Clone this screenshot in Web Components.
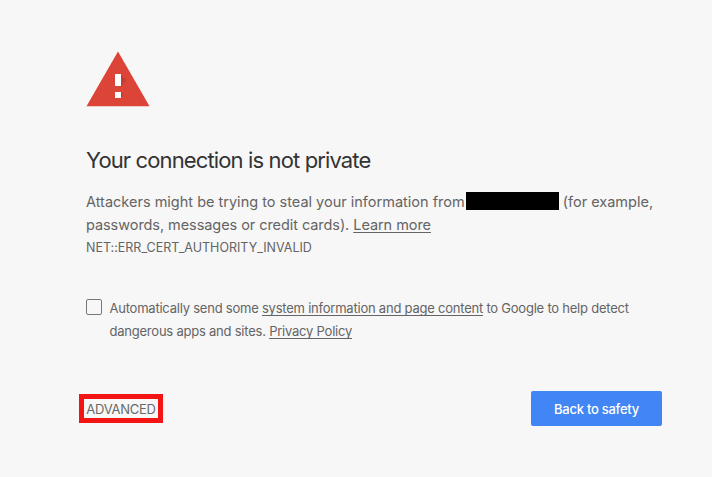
<!DOCTYPE html>
<html lang="en">
<head>
<meta charset="utf-8">
<title>Privacy error</title>
<style>
  body {
    margin: 0;
    background: #f7f7f7;
    color: #646464;
    font-family: Inter, "Liberation Sans", sans-serif;
  }
</style>
</head>
<body>
<ssl-interstitial></ssl-interstitial>

<script>
class WarningIcon extends HTMLElement {
  constructor() {
    super();
    this.attachShadow({ mode: 'open' });
    this.shadowRoot.innerHTML = `
      <style>
        :host { display: block; width: 64px; height: 56px; }
        svg { display: block; }
      </style>
      <svg width="64" height="56" viewBox="0 0 64 56" aria-hidden="true">
        <path fill="#db4437" d="M32 .5 63.5 55.300H.5z"/>
        <path fill="#c53d32" d="M35 24l5 5-5 7zM35 41l3 3-3 3z"/>
        <path fill="#fff" d="M29 23h6v12h-6zM29 41h6v6h-6z"/>
      </svg>`;
  }
}

class TextLink extends HTMLElement {
  constructor() {
    super();
    this.attachShadow({ mode: 'open' });
    this.shadowRoot.innerHTML = `
      <style>
        :host { display: inline; }
        a {
          color: inherit;
          text-decoration: underline;
          text-decoration-thickness: 1px;
          text-underline-offset: 2px;
          text-decoration-skip-ink: none;
        }
      </style>
      <a href="#"><slot></slot></a>`;
  }
}

class RedactedHost extends HTMLElement {
  constructor() {
    super();
    this.attachShadow({ mode: 'open' });
    this.shadowRoot.innerHTML = `
      <style>
        :host {
          display: inline-block;
          width: 93px;
          height: 18px;
          margin: 0 0 0 1px;
          vertical-align: -3px;
          background: #000;
        }
      </style>`;
  }
}

class OptInCheckbox extends HTMLElement {
  constructor() {
    super();
    this.attachShadow({ mode: 'open' });
    this.shadowRoot.innerHTML = `
      <style>
        :host {
          display: flex;
          gap: 7.500px;
          font-size: 13px;
          line-height: 23px;
          letter-spacing: -.225px;
          white-space: nowrap;
        }
        .box {
          box-sizing: border-box;
          flex: none;
          width: 16px;
          height: 16px;
          margin-top: 2px;
          border: 1px solid #777;
          border-radius: 2px;
        }
      </style>
      <span class="box" role="checkbox" aria-checked="false" tabindex="0"></span>
      <div><slot></slot></div>`;

    this.box = this.shadowRoot.querySelector('.box');
  }

  connectedCallback() {
    this.box.addEventListener('click', this.toggle);
  }

  disconnectedCallback() {
    this.box.removeEventListener('click', this.toggle);
  }

  toggle = () => {
    const checked = this.box.getAttribute('aria-checked') === 'true';
    this.box.setAttribute('aria-checked', String(!checked));
  }
}

class PageButton extends HTMLElement {
  constructor() {
    super();
    this.attachShadow({ mode: 'open' });
    this.shadowRoot.innerHTML = `
      <style>
        :host { display: block; }
        button {
          display: block;
          box-sizing: border-box;
          margin: 0;
          padding: 0;
          border: 0;
          background: none;
          color: #696969;
          font: inherit;
          font-size: 13px;
          letter-spacing: -.25px;
          white-space: nowrap;
          cursor: pointer;
        }
        :host([kind="primary"]) button {
          width: 131px;
          height: 35px;
          border-radius: 2px;
          background: #4285f4;
          color: #fff;
          font-weight: 500;
        }
        :host([kind="outlined"]) button {
          width: 84px;
          height: 29px;
          border: 5px solid #f41414;
        }
      </style>
      <button type="button"><slot></slot></button>`;
  }
}

class SslInterstitial extends HTMLElement {
  constructor() {
    super();
    this.attachShadow({ mode: 'open' });
    this.shadowRoot.innerHTML = `
      <style>
        :host {
          display: block;
          box-sizing: border-box;
          width: 712px;
          height: 477px;
          padding: 51px 50px 0 86px;
        }
        h1 {
          margin: 38px 0 0;
          color: #333;
          font-size: 22px;
          font-weight: 400;
          line-height: 30px;
          letter-spacing: -.87px;
          white-space: nowrap;
        }
        p {
          margin: 15px 0 0;
          font-size: 14.500px;
          line-height: 23px;
          white-space: nowrap;
        }
        .second { letter-spacing: -.065px; }
        .code {
          margin-top: 1px;
          font-size: 12.500px;
          line-height: 22px;
          font-feature-settings: "calt" 0;
        }
        opt-in-checkbox { margin-top: 38px; }
        nav {
          display: flex;
          align-items: center;
          justify-content: space-between;
          margin: 48px 0 0 -7px;
        }
      </style>
      <warning-icon></warning-icon>
      <h1>Your connection is not private</h1>
      <p>Attackers might be trying to steal your information from<redacted-host></redacted-host>
        (for example,<br><span class="second">passwords, messages or credit cards). <text-link>Learn more</text-link></span></p>
      <div class="code">NET::ERR_CERT_AUTHORITY_INVALID</div>
      <opt-in-checkbox>Automatically send some <text-link>system information and page content</text-link>
        to Google to help detect<br>dangerous apps and sites. <text-link>Privacy Policy</text-link></opt-in-checkbox>
      <nav>
        <page-button kind="outlined">ADVANCED</page-button>
        <page-button kind="primary">Back to safety</page-button>
      </nav>`;
  }
}

customElements.define('warning-icon', WarningIcon);
customElements.define('text-link', TextLink);
customElements.define('redacted-host', RedactedHost);
customElements.define('opt-in-checkbox', OptInCheckbox);
customElements.define('page-button', PageButton);
customElements.define('ssl-interstitial', SslInterstitial);
</script>
</body>
</html>
